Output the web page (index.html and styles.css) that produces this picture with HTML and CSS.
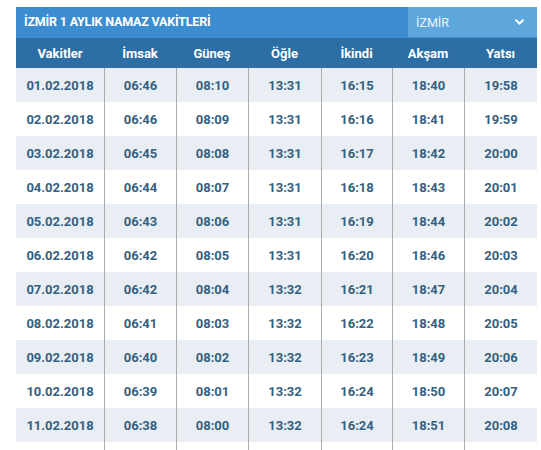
FILE: index.html
```html
<!DOCTYPE html>
<html lang="tr">
<head>
<meta charset="utf-8">
<link rel="stylesheet" href="styles.css">
</head>
<body>
<div class="wrap">
  <div class="titlebar">
    <div class="title">İZMİR 1 AYLIK NAMAZ VAKİTLERİ</div>
    <div class="select">
      <span>İZMİR</span>
      <svg class="chev" width="11" height="8" viewBox="0 0 11 8"><path d="M1.5 1.8 L5.5 5.6 L9.5 1.8" fill="none" stroke="#fff" stroke-width="2.2"/></svg>
    </div>
  </div>
  <div class="row head">
    <div>Vakitler</div><div>İmsak</div><div>Güneş</div><div>Öğle</div><div>İkindi</div><div>Akşam</div><div>Yatsı</div>
  </div>
  <div class="row alt"><div>01.02.2018</div><div>06:46</div><div>08:10</div><div>13:31</div><div>16:15</div><div>18:40</div><div>19:58</div></div>
  <div class="row"><div>02.02.2018</div><div>06:46</div><div>08:09</div><div>13:31</div><div>16:16</div><div>18:41</div><div>19:59</div></div>
  <div class="row alt"><div>03.02.2018</div><div>06:45</div><div>08:08</div><div>13:31</div><div>16:17</div><div>18:42</div><div>20:00</div></div>
  <div class="row"><div>04.02.2018</div><div>06:44</div><div>08:07</div><div>13:31</div><div>16:18</div><div>18:43</div><div>20:01</div></div>
  <div class="row alt"><div>05.02.2018</div><div>06:43</div><div>08:06</div><div>13:31</div><div>16:19</div><div>18:44</div><div>20:02</div></div>
  <div class="row"><div>06.02.2018</div><div>06:42</div><div>08:05</div><div>13:31</div><div>16:20</div><div>18:46</div><div>20:03</div></div>
  <div class="row alt"><div>07.02.2018</div><div>06:42</div><div>08:04</div><div>13:32</div><div>16:21</div><div>18:47</div><div>20:04</div></div>
  <div class="row"><div>08.02.2018</div><div>06:41</div><div>08:03</div><div>13:32</div><div>16:22</div><div>18:48</div><div>20:05</div></div>
  <div class="row alt"><div>09.02.2018</div><div>06:40</div><div>08:02</div><div>13:32</div><div>16:23</div><div>18:49</div><div>20:06</div></div>
  <div class="row"><div>10.02.2018</div><div>06:39</div><div>08:01</div><div>13:32</div><div>16:24</div><div>18:50</div><div>20:07</div></div>
  <div class="row alt"><div>11.02.2018</div><div>06:38</div><div>08:00</div><div>13:32</div><div>16:24</div><div>18:51</div><div>20:08</div></div>
  <div class="row tail"><div></div><div></div><div></div><div></div><div></div><div></div><div></div></div>
</div>
</body>
</html>
```
FILE: styles.css
```css
html, body {
  margin: 0;
  padding: 0;
  background: #fff;
  overflow: hidden;
}
body {
  font-family: Roboto, "Liberation Sans", sans-serif;
}
.wrap {
  width: 521px;
  margin: 7px 0 0 16px;
}
.titlebar {
  display: flex;
  justify-content: space-between;
  align-items: flex-start;
  height: 31px;
  background: #3b8dcf;
}
.title {
  color: #fff;
  font-weight: 700;
  font-size: 12.5px;
  letter-spacing: -0.2px;
  line-height: 30px;
  padding-left: 8px;
}
.select {
  width: 129px;
  height: 30px;
  box-sizing: border-box;
  background: #5ea7dd;
  display: flex;
  align-items: center;
  justify-content: space-between;
  padding: 0 12px 0 8px;
  color: #eaf4fb;
  font-size: 12.5px;
}
.chev {
  display: block;
}
.row {
  display: grid;
  grid-template-columns: 88px 72px 72px 73px 71px 72px 73px;
  height: 34px;
  background: #fff;
  color: #36607e;
  font-weight: 700;
  font-size: 13px;
}
.row > div {
  display: flex;
  align-items: center;
  justify-content: center;
  border-left: 1px solid #ababab;
  box-sizing: border-box;
}
.row > div:first-child {
  border-left: none;
}
.row.alt {
  background: #e9eef4;
}
.row.tail {
  height: 20px;
}
.row.head {
  height: 30px;
  background: #2d6ea5;
  color: #fff;
  font-weight: 700;
  font-size: 13px;
}
.row.head > div {
  border-left: none;
}
```
